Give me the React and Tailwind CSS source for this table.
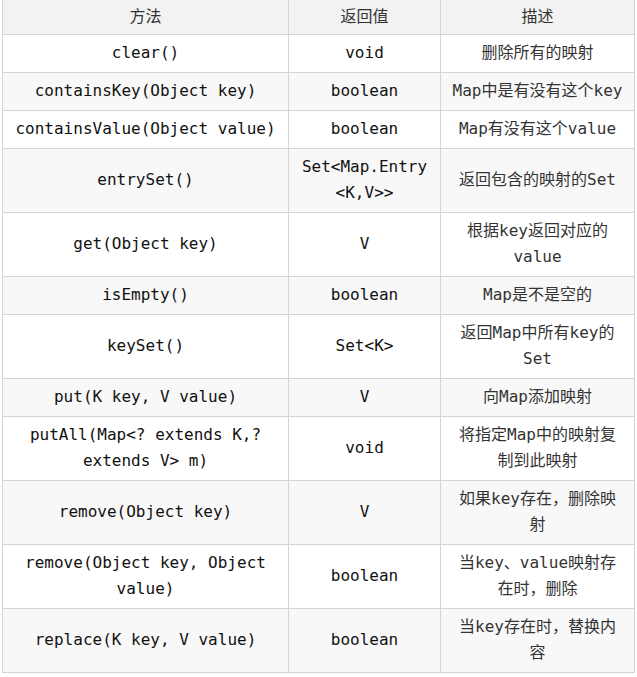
import React from 'react';

const rows = [
  ['clear()', 'void', '删除所有的映射'],
  ['containsKey(Object key)', 'boolean', 'Map中是有没有这个key'],
  ['containsValue(Object value)', 'boolean', 'Map有没有这个value'],
  ['entrySet()', <>Set&lt;Map.Entry<br />&lt;K,V&gt;&gt;</>, '返回包含的映射的Set'],
  ['get(Object key)', 'V', '根据key返回对应的value'],
  ['isEmpty()', 'boolean', 'Map是不是空的'],
  ['keySet()', 'Set<K>', '返回Map中所有key的Set'],
  ['put(K key, V value)', 'V', '向Map添加映射'],
  ['putAll(Map<? extends K,? extends V> m)', 'void', '将指定Map中的映射复制到此映射'],
  ['remove(Object key)', 'V', '如果key存在，删除映射'],
  ['remove(Object key, Object value)', 'boolean', '当key、value映射存在时，删除'],
  ['replace(K key, V value)', 'boolean', '当key存在时，替换内容'],
];

const cell = 'border border-[#d4d4d4] pt-[5px] pb-[6px] text-center align-middle';

export default function App() {
  return (
    <div className="bg-white pl-[2px] pt-0 w-[637px] h-[677px]">
      <table
        className="table-fixed border-collapse w-[632px] text-[16px] leading-[26px] text-[#111]"
        style={{ fontFamily: '"DejaVu Sans Mono", "Noto Sans CJK SC", monospace' }}
      >
        <colgroup>
          <col className="w-[286px]" />
          <col className="w-[152px]" />
          <col className="w-[194px]" />
        </colgroup>
        <thead>
          <tr className="bg-[#f2f2f2] text-[#333]">
            <th className="border border-[#d4d4d4] border-t-0 px-[10px] py-[4px] font-normal text-center">方法</th>
            <th className="border border-[#d4d4d4] border-t-0 px-[10px] py-[4px] font-normal text-center">返回值</th>
            <th className="border border-[#d4d4d4] border-t-0 px-[10px] py-[4px] font-normal text-center">描述</th>
          </tr>
        </thead>
        <tbody>
          {rows.map((r, i) => (
            <tr key={i} className={i % 2 === 0 ? 'bg-white' : 'bg-[#f8f8f8]'}>
              <td className={cell + ' px-[10px]'}>{r[0]}</td>
              <td className={cell + ' px-[10px]'}>{r[1]}</td>
              <td className={cell + ' px-[11px] text-[#333]'}>{r[2]}</td>
            </tr>
          ))}
        </tbody>
      </table>
    </div>
  );
}
